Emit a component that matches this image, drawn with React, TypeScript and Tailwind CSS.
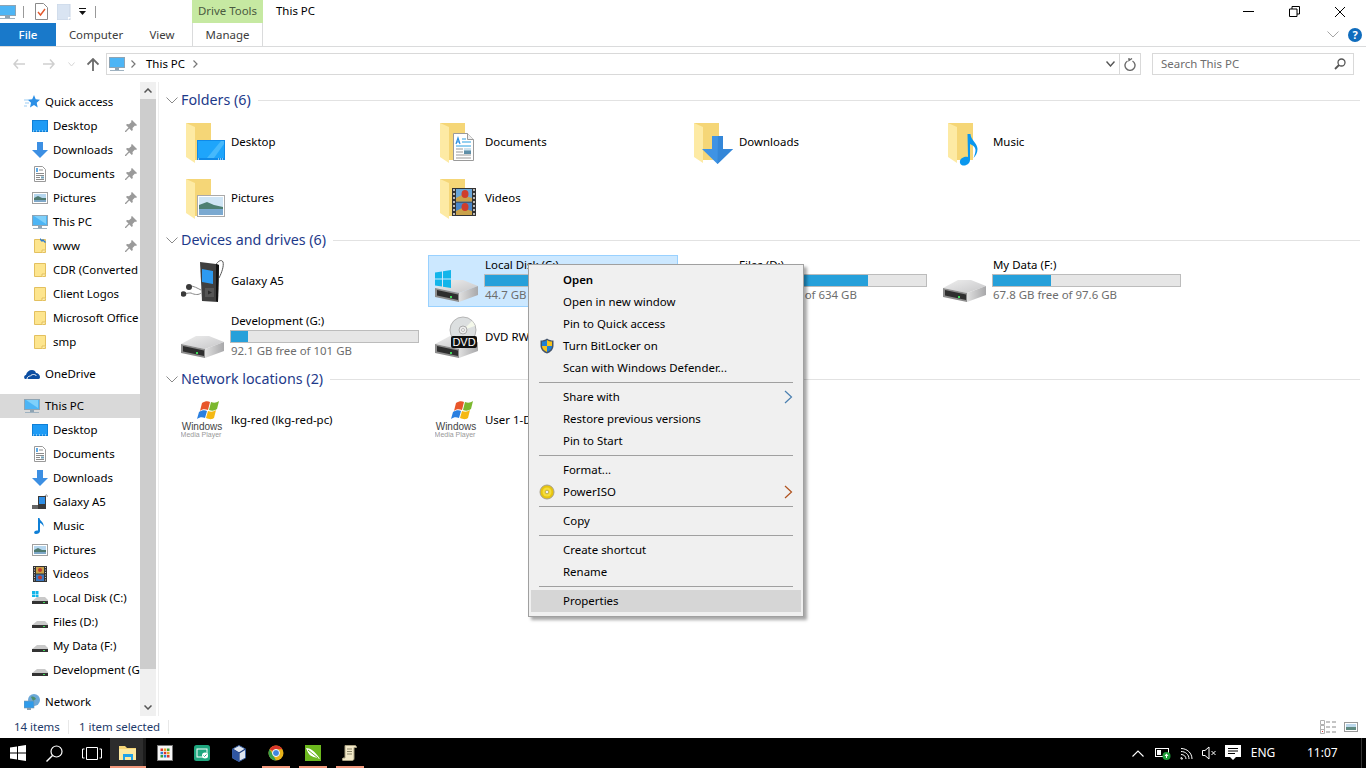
import React from "react";

const font = "font-['Noto_Sans',sans-serif]";

/* ---------- small sidebar icons (16x16) ---------- */
const SDesktop = () => (
  <svg width="16" height="16" viewBox="0 0 16 16"><rect x="0" y="2" width="16" height="12" fill="#0f7fd6" /><rect x="1" y="3" width="14" height="10" fill="#1e9bf5" /><path d="M1 13h14" stroke="#d8efff" strokeDasharray="1 2" /></svg>
);
const SDown = () => (
  <svg width="16" height="16" viewBox="0 0 16 16"><path d="M5 0h6v8h5l-8 8-8-8h5z" fill="#3c8fe3" /></svg>
);
const SDoc = () => (
  <svg width="16" height="16" viewBox="0 0 16 16"><path d="M2.5.5h8l3 3v12h-11z" fill="#fff" stroke="#9a9a9a" /><path d="M4 3h2M4 5h2" stroke="#2a8fe0" strokeWidth="1.4" /><path d="M7 4h4M4 7.5h8M4 9.5h8M4 11.5h4M4 13.5h8" stroke="#8a8a8a" /><rect x="9" y="10.5" width="3" height="2" fill="#6f9fb8" /></svg>
);
const SPic = () => (
  <svg width="16" height="16" viewBox="0 0 16 16"><rect x=".5" y="2.5" width="15" height="11" fill="#fff" stroke="#a0a0a0" /><rect x="2" y="4" width="12" height="4" fill="#b5d6ee" /><path d="M2 8l4-2 4 2 4 0v4H2z" fill="#4f7a70" /><rect x="2" y="10" width="12" height="2" fill="#7fa8c8" /></svg>
);
const SPC = () => (
  <svg width="16" height="16" viewBox="0 0 16 16"><rect x=".5" y="1.5" width="15" height="10" fill="#4db5f5" stroke="#8ea4b4" /><path d="M2 2h12v8z" fill="#7fd0fa" /><rect x="6" y="12" width="4" height="2" fill="#8ea4b4" /><path d="M1 14.5h14" stroke="#9fb2c0" /></svg>
);
const SFolder = ({ www }: { www?: boolean }) => (
  <svg width="16" height="16" viewBox="0 0 16 16"><path d="M2.5 1.5h11v13h-11z" fill="#fde58e" stroke="#e3c05f" /><path d="M10 15v-3h4" fill="#fff1b8" stroke="#e3c05f" />{www && <path d="M8 0l2 2 1-1 3 3-1 1-2-2-1 1-2-2z" fill="#2f7dd0" />}</svg>
);
const SOneDrive = () => (
  <svg width="16" height="16" viewBox="0 0 16 16"><path d="M1 13c-1.500-1-1-4 1-4 .5-3 3-5 6-5 2 0 3.500 1 4 3 2 0 4 2 4 4 0 1-.5 2-1.500 2z" fill="#0b4ea2" /><path d="M3 13c0-2 2-3 3.500-3 1-2 5-2 6 0" fill="none" stroke="#fff" strokeWidth="1" /></svg>
);
const SGalaxy = () => (
  <svg width="16" height="16" viewBox="0 0 16 16"><rect x="6" y="2" width="8" height="13" fill="#3a3a3a" /><rect x="7" y="3" width="6" height="7" fill="#2f8fe6" /><path d="M13 2c1-2 3-1 2 1" fill="none" stroke="#888" /><rect x="0" y="11" width="6" height="4" fill="#666" /></svg>
);
const SMusic = () => (
  <svg width="16" height="16" viewBox="0 0 16 16"><path d="M6 0h1.500c0 3 5 4 4 9-.3-2-2-3.500-3.500-4v8c0 2-2 3-4 3s-2.500-2-1-3c1-.7 2-.7 3-.4z" fill="#0f7fd6" /></svg>
);
const SVideo = () => (
  <svg width="16" height="16" viewBox="0 0 16 16"><rect x="1" y="0" width="14" height="16" fill="#333" /><rect x="4" y="1" width="8" height="6.500" fill="#c9a24a" /><rect x="4" y="8.500" width="8" height="6.500" fill="#3b78c0" /><circle cx="8" cy="4" r="2" fill="#c0392b" /><circle cx="8" cy="11.500" r="2" fill="#c0392b" /><path d="M2.500 1v14M13.500 1v14" stroke="#ccc" strokeDasharray="1 1.500" /></svg>
);
const SDrive = ({ win }: { win?: boolean }) => (
  <svg width="16" height="16" viewBox="0 0 16 16">
    <path d="M2 9.500l3-2.500h8l3 3v1H0z" fill="#c9c9c9" />
    <path d="M0 11h16v3H0z" fill="#333" />
    <rect x="11" y="12" width="2" height="1" fill="#3fdc5a" />
    {win && <g fill="#13b5ea"><rect x="0" y="1" width="3" height="3" /><rect x="3.500" y="1" width="3" height="3" /><rect x="0" y="4.500" width="3" height="2.500" /><rect x="3.500" y="4.500" width="3" height="2.500" /></g>}
  </svg>
);
const SStar = () => (
  <svg width="16" height="16" viewBox="0 0 16 16"><path d="M10 1l1.700 4.300 4.300.4-3.300 3 1 4.800L10 11l-4 2.500 1-4.800-3.300-3 4.500-.4z" fill="#2b8fe6" /><path d="M0 6h4M1 9h4M0 12h3" stroke="#9dcdf3" /></svg>
);
const SNetwork = () => (
  <svg width="16" height="16" viewBox="0 0 16 16"><circle cx="10" cy="6" r="6" fill="#6ba8d8" /><path d="M7 3c2-1 4 0 5 2l-3 2z" fill="#4f8f6a" /><rect x="0" y="7" width="10" height="7" fill="#2f9bea" stroke="#7e98ab" strokeWidth=".6" /><rect x="3" y="14" width="4" height="2" fill="#8a9faf" /></svg>
);
const Pin = () => (
  <svg width="12" height="12" viewBox="0 0 12 12"><path d="M7 0l5 5-1 1-1-.5-2.500 2.500.3 2-1 1-2.500-2.500L1 12l-1 0 0-1 3.500-3.500L1 5l1-1 2 .3L6.500 2 6 1z" fill="#9a9a9a" /></svg>
);

/* ---------- large icons (44x48) ---------- */
const FolderBase = () => (
  <g>
    <path d="M5 5h25v37H14z" fill="#f5d677" />
    <path d="M5 5l9 4v36l-9-6z" fill="#fdeaa4" />
  </g>
);
const LDesktop = () => (
  <svg width="44" height="48" viewBox="0 0 44 48"><FolderBase /><rect x="16" y="22" width="28" height="20" fill="#0f8ae8" /><path d="M17 23h26v17H17z" fill="#1ea5fb" /><path d="M26 40l14-17h3v3L33 40z" fill="#46b9fc" /><path d="M17 41h1M37 41h5" stroke="#fff" strokeDasharray="1 1" /></svg>
);
const LDocs = () => (
  <svg width="44" height="48" viewBox="0 0 44 48"><FolderBase /><path d="M18.500 15.500h14l6 6v21h-20z" fill="#fff" stroke="#9a9a9a" /><path d="M32.500 15.500v6h6" fill="#eee" stroke="#9a9a9a" /><path d="M21 26l2-6 2 6M22 24h2" fill="none" stroke="#2a8fe0" strokeWidth="1.200" /><path d="M27 21h4M27 24h9M21 28h15" stroke="#2a9fe0" /><path d="M21 31h7M21 34h7M21 37h15M21 40h15" stroke="#999" /><rect x="29" y="30" width="7" height="6" fill="#5f8fa8" /><rect x="29" y="30" width="7" height="2.500" fill="#cde3ef" /></svg>
);
const LDown = () => (
  <svg width="44" height="48" viewBox="0 0 44 48"><FolderBase /><path d="M23 18h11v13h10L28.500 46 13 31h10z" fill="#3f93e4" /><path d="M29 18h5v13h10L28.500 46z" fill="#3487d8" /></svg>
);
const LMusic = () => (
  <svg width="44" height="48" viewBox="0 0 44 48"><FolderBase /><path d="M24.500 16h3c0 6 7 9 7 15 0 4-2 7-4 9 1-3 2-5 2-8 0-3-3-5-5.500-6v16c0 3-3 5.500-6 5.500s-4.500-2-4-4.500c.5-3 5-5 8-4z" fill="#0a97ee" /></svg>
);
const LPic = () => (
  <svg width="44" height="48" viewBox="0 0 44 48"><FolderBase /><rect x="16.500" y="21.500" width="27" height="21" fill="#fff" stroke="#aaa" /><rect x="18" y="23" width="24" height="10" fill="#cfe5f5" /><path d="M18 31l8-3 7 3 9 2v6H18z" fill="#4d7f72" /><rect x="18" y="35" width="24" height="6" fill="#7ba9d0" /></svg>
);
const LVideo = () => (
  <svg width="44" height="48" viewBox="0 0 44 48"><FolderBase /><rect x="17" y="14" width="24" height="28" fill="#333" /><rect x="21" y="15" width="16" height="12.500" fill="#6aa6d8" /><rect x="21" y="28.500" width="16" height="12.500" fill="#4a86c8" /><path d="M21 24l6-3 10 3v3.500H21z" fill="#c9a24a" /><path d="M21 37l6-3 10 3v4H21z" fill="#c9a24a" /><ellipse cx="30" cy="20" rx="3.500" ry="4" fill="#cf3d2b" /><ellipse cx="30" cy="33" rx="3.500" ry="4" fill="#cf3d2b" /><path d="M19 15v26M39 15v26" stroke="#bbb" strokeWidth="2" strokeDasharray="2 2" /></svg>
);
const DriveShape = () => (
  <g>
    <defs>
      <linearGradient id="drvTop" x1="0" y1="0" x2="1" y2="1"><stop offset="0" stopColor="#eeeeee" /><stop offset="1" stopColor="#c6c6c8" /></linearGradient>
      <linearGradient id="drvRight" x1="0" y1="0" x2="1" y2="0"><stop offset="0" stopColor="#e0e0e0" /><stop offset="1" stopColor="#a8a8aa" /></linearGradient>
    </defs>
    <path d="M0 31l15-8h13l15 6-19 7z" fill="url(#drvTop)" />
    <path d="M24 36l19-7v9l-19 7z" fill="url(#drvRight)" />
    <path d="M0 31l24 5v9L0 40z" fill="#8c8c8c" />
    <path d="M2 33l21 4.500v5.500L2 38.500z" fill="#2e2e2e" />
    <rect x="15" y="39" width="2" height="2" fill="#3fdc5a" />
  </g>
);
const LDrive = () => (<svg width="44" height="48" viewBox="0 0 44 48"><DriveShape /></svg>);
const LWinDrive = () => (
  <svg width="44" height="48" viewBox="0 0 44 48"><DriveShape /><g fill="#13b5ea"><path d="M0 15.500l7-1v7H0z" /><path d="M8 14.300l8-1.300v8.500H8z" /><path d="M0 22.500h7v7l-7-1z" /><path d="M8 22.500h8V31l-8-1.200z" /></g></svg>
);
const LDvd = () => (
  <svg width="44" height="48" viewBox="0 0 44 48">
    <DriveShape />
    <circle cx="28" cy="17" r="13" fill="#dcdfe0" stroke="#b5b5b5" />
    <path d="M28 17l9-9a13 13 0 0 1 3 5z" fill="#f4f8ea" />
    <circle cx="28" cy="17" r="4" fill="#eee" stroke="#aaa" />
    <circle cx="28" cy="17" r="1.500" fill="#fff" stroke="#bbb" />
    <rect x="16" y="23" width="26" height="12" rx="2" fill="#111" />
    <text x="29" y="33" textAnchor="middle" fill="#fff" fontSize="11" fontFamily="Liberation Sans, sans-serif">DVD</text>
  </svg>
);
const LGalaxy = () => (
  <svg width="44" height="48" viewBox="0 0 44 48">
    <path d="M33 11c2-5 7-10 9-6 1 4-1 10-4 16" fill="none" stroke="#555" />
    <path d="M9 29c4 0 7 2 11 4M3 37c4-1 5-1 7-1 4 2 8 2 10 0" fill="none" stroke="#888" />
    <path d="M19 5l16 2 3 1-1 37-16-1z" fill="#3f3f3f" />
    <path d="M35 7l3 1-1 37-2-1z" fill="#111" />
    <path d="M21 12l11 2v13l-11-2z" fill="#2d9af0" />
    <rect x="24" y="31" width="9" height="9" fill="#555" />
    <path d="M27 33.500l4 2-4 2z" fill="#2a2a2a" />
    <circle cx="8" cy="30" r="3" fill="#3a3a3a" />
    <circle cx="2.500" cy="37" r="2.800" fill="#3a3a3a" />
  </svg>
);
const LWmp = () => (
  <svg width="44" height="48" viewBox="0 0 44 48">
    <g transform="translate(10 -1)">
      <path d="M11 8c3-2 6-2 8-1l-2 8c-3-1-6-1-8 1z" fill="#e8562a" />
      <path d="M20 7c3 1 5 1 8-1l-2 8c-3 2-5 2-8 1z" fill="#7cb82f" />
      <path d="M8 17c3-2 6-2 8-1l-2 7c-3-1-5-1-8 1z" fill="#2a7fe0" />
      <path d="M17 16c3 1 5 1 8-1l-2 8c-3 2-5 1-8 0z" fill="#f5b914" />
    </g>
    <text x="21" y="33.500" textAnchor="middle" fill="#444" fontSize="10" fontFamily="Liberation Sans, sans-serif">Windows</text>
    <text x="20" y="40.500" textAnchor="middle" fill="#999" fontSize="7" fontFamily="Liberation Sans, sans-serif">Media Player</text>
  </svg>
);

/* ---------- data ---------- */
type Nav = { label: string; icon: React.ReactNode; pin?: boolean };
const quick: Nav[] = [
  { label: "Desktop", icon: <SDesktop />, pin: true },
  { label: "Downloads", icon: <SDown />, pin: true },
  { label: "Documents", icon: <SDoc />, pin: true },
  { label: "Pictures", icon: <SPic />, pin: true },
  { label: "This PC", icon: <SPC />, pin: true },
  { label: "www", icon: <SFolder www />, pin: true },
  { label: "CDR (Converted", icon: <SFolder /> },
  { label: "Client Logos", icon: <SFolder /> },
  { label: "Microsoft Office", icon: <SFolder /> },
  { label: "smp", icon: <SFolder /> },
];
const pc: Nav[] = [
  { label: "Desktop", icon: <SDesktop /> },
  { label: "Documents", icon: <SDoc /> },
  { label: "Downloads", icon: <SDown /> },
  { label: "Galaxy A5", icon: <SGalaxy /> },
  { label: "Music", icon: <SMusic /> },
  { label: "Pictures", icon: <SPic /> },
  { label: "Videos", icon: <SVideo /> },
  { label: "Local Disk (C:)", icon: <SDrive win /> },
  { label: "Files (D:)", icon: <SDrive /> },
  { label: "My Data (F:)", icon: <SDrive /> },
  { label: "Development (G:)", icon: <SDrive /> },
];

const NavChild = ({ item }: { item: Nav }) => (
  <div className="flex h-[24px] items-center pl-[32px]">
    <span className="w-[16px] h-[16px] shrink-0">{item.icon}</span>
    <span className="ml-[5px] whitespace-nowrap">{item.label}</span>
    {item.pin && <span className="ml-auto mr-[3px] w-[12px] h-[12px] flex shrink-0"><Pin /></span>}
  </div>
);
const NavTop = ({ label, icon, active, extra }: { label: string; icon: React.ReactNode; active?: boolean; extra: string }) => (
  <div className={`flex h-[24px] items-center pl-[24px] ${extra} ${active ? "bg-[#d9d9d9]" : ""}`}>
    <span className="w-[16px] h-[16px] shrink-0">{icon}</span>
    <span className="ml-[5px] whitespace-nowrap">{label}</span>
  </div>
);

const Header = ({ title }: { title: string }) => (
  <div className="flex h-[24px] items-center pl-[7px]">
    <svg width="12" height="7" viewBox="0 0 12 7"><path d="M.5.5L6 6l5.500-5.500" fill="none" stroke="#8a8a8a" /></svg>
    <span className="ml-[3px] text-[14.3px] text-[#1e3a8a] whitespace-nowrap">{title}</span>
    <span className="ml-[7px] flex-1 h-px bg-[#e2e2e2]" />
  </div>
);

const Tile = ({ icon, name, selected }: { icon: React.ReactNode; name: string; selected?: boolean }) => (
  <div className={`flex h-[52px] w-[250px] items-center border pl-[6px] ${selected ? "bg-[#cce8ff] border-[#99d1ff]" : "border-transparent"}`}>
    <span className="w-[44px] h-[48px] shrink-0">{icon}</span>
    <span className="ml-[6px] whitespace-nowrap">{name}</span>
  </div>
);
const DriveTile = ({ icon, name, sub, used, selected }: { icon: React.ReactNode; name: string; sub: string; used: number; selected?: boolean }) => (
  <div className={`flex h-[52px] w-[250px] items-center border pl-[6px] ${selected ? "bg-[#cce8ff] border-[#99d1ff]" : "border-transparent"}`}>
    <span className="w-[44px] h-[48px] shrink-0">{icon}</span>
    <div className="ml-[5px] self-start pt-px w-[189px]">
      <div className="h-[16px] pl-px leading-[16px] whitespace-nowrap">{name}</div>
      <div className="mt-px h-[13px] border border-[#bcbcbc] bg-[#e6e6e6]">
        <div className="h-full bg-[#26a0da]" style={{ width: `${used}%` }} />
      </div>
      <div className="h-[16px] pl-px leading-[16px] text-[#6d6d6d] whitespace-nowrap">{sub}</div>
    </div>
  </div>
);

type MI = { t: string; bold?: boolean; icon?: React.ReactNode; arrow?: string; hi?: boolean } | null;
const menu: MI[] = [
  { t: "Open", bold: true },
  { t: "Open in new window" },
  { t: "Pin to Quick access" },
  {
    t: "Turn BitLocker on",
    icon: (
      <svg width="16" height="16" viewBox="0 0 16 16"><path d="M8 .5c2 1.500 4 2 6.500 2v5c0 4-3 7-6.500 8-3.500-1-6.500-4-6.500-8v-5C4 2.500 6 2 8 .5z" fill="#44546a" /><path d="M8 2v6H3V3.500C5 3.500 6.500 3 8 2z" fill="#1e7fd6" /><path d="M8 2c1.500 1 3 1.500 5 1.500V8H8z" fill="#f8c31a" /><path d="M3 8h5v6c-2.500-1-5-3-5-6z" fill="#f8c31a" /><path d="M8 8h5c0 3-2.500 5-5 6z" fill="#1e7fd6" /></svg>
    ),
  },
  { t: "Scan with Windows Defender..." },
  null,
  { t: "Share with", arrow: "#4a7fb0" },
  { t: "Restore previous versions" },
  { t: "Pin to Start" },
  null,
  { t: "Format..." },
  {
    t: "PowerISO",
    arrow: "#b0521e",
    icon: (
      <svg width="16" height="16" viewBox="0 0 16 16"><circle cx="8" cy="8" r="7" fill="#e6c40f" stroke="#a8a08a" /><circle cx="8" cy="8" r="4.500" fill="#f6dd3a" /><circle cx="8" cy="8" r="1.800" fill="#f0f0f0" stroke="#a08a20" strokeWidth=".6" /></svg>
    ),
  },
  null,
  { t: "Copy" },
  null,
  { t: "Create shortcut" },
  { t: "Rename" },
  null,
  { t: "Properties", hi: true },
];

const Cell = ({ children, on, active }: { children: React.ReactNode; on?: boolean; active?: boolean }) => (
  <div className={`relative flex h-[30px] items-center justify-center ${active ? "w-[36px] bg-[#2d2d2d]" : "w-[37px]"}`}>
    {children}
    {active && <span className="absolute inset-y-0 right-0 w-[3px] bg-[#1c1c1c]" />}
    {on && <span className={`absolute bottom-0 h-[2px] bg-[#f2987c] ${active ? "left-0 right-0" : "left-[5px] right-[4px]"}`} />}
  </div>
);

export default function App() {
  return (
    <div className={`relative flex h-[768px] w-[1366px] flex-col overflow-hidden bg-white text-[11.45px] text-black ${font}`}>
      {/* Title row */}
      <div className="flex h-[23px] shrink-0 items-center">
        <div className="flex w-[192px] items-center">
          <svg className="ml-[-1px]" width="17" height="16" viewBox="0 0 17 16"><rect x=".5" y="1.500" width="16" height="10" fill="#4db5f5" stroke="#8ea4b4" /><rect x="6" y="12" width="5" height="2" fill="#8ea4b4" /><path d="M1 14.500h15" stroke="#9fb2c0" /></svg>
          <span className="ml-[7px] w-px h-[12px] bg-[#999]" />
          <svg className="ml-[11px]" width="13" height="17" viewBox="0 0 13 17"><path d="M.5.500h8l4 4v12H.5z" fill="#fff" stroke="#8a8a8a" /><path d="M3 9l2.500 3L10 6" fill="none" stroke="#e2572b" strokeWidth="1.400" /></svg>
          <svg className="ml-[9px]" width="14" height="16" viewBox="0 0 14 16"><path d="M0 0h13v16H0z" fill="#d9e4f2" stroke="#c9d5e5" /><path d="M11 16v-3h3" fill="#fff" /></svg>
          <svg className="ml-[7px]" width="9" height="9" viewBox="0 0 9 9"><path d="M1 1.500h7" stroke="#111" /><path d="M1 4h7L4.500 8z" fill="#111" /></svg>
          <span className="ml-[8px] w-px h-[12px] bg-[#999]" />
        </div>
        <div className="flex h-full w-[71px] items-center justify-center bg-[#c6e9a2] pb-[2px] text-[#4a5a40]">Drive Tools</div>
        <div className="ml-[13px] pb-px">This PC</div>
        <div className="ml-auto mr-[3px] flex h-full">
          <div className="flex w-[46px] items-center justify-center"><svg width="11" height="11" viewBox="0 0 11 11"><path d="M0 5.500h11" stroke="#000" /></svg></div>
          <div className="flex w-[46px] items-center justify-center"><svg width="11" height="11" viewBox="0 0 11 11"><path d="M.5 3h7.500v7.500H.5zM3 3V.5h7.500V8H8" fill="none" stroke="#000" /></svg></div>
          <div className="flex w-[46px] items-center justify-center"><svg width="12" height="12" viewBox="0 0 12 12"><path d="M1 1l10 10M11 1L1 11" stroke="#000" /></svg></div>
        </div>
      </div>
      {/* Ribbon tabs */}
      <div className="flex h-[24px] shrink-0 items-stretch border-b border-[#dadbdc] text-[#3c3c3c]">
        <div className="flex w-[56px] items-center justify-center bg-[#1979ca] font-medium text-white">File</div>
        <div className="flex w-[80px] items-center justify-center">Computer</div>
        <div className="flex w-[56px] items-center justify-center pr-[4px]">View</div>
        <div className="flex w-[71px] items-center justify-center border-x border-[#dadbdc]">Manage</div>
        <div className="ml-auto flex items-center">
          <svg width="12" height="7" viewBox="0 0 12 7"><path d="M.5.5L6 6l5.500-5.500" fill="none" stroke="#a5a5a5" /></svg>
          <div className="ml-[9px] mr-[4px] flex h-[14px] w-[14px] items-center justify-center rounded-full bg-[#0f6cbd] text-[11px] font-bold leading-none text-white">?</div>
        </div>
      </div>
      {/* Address row */}
      <div className="flex h-[35px] shrink-0 items-start pt-[6px]">
        <div className="flex h-[22px] w-[106px] items-center">
          <svg className="ml-[13px]" width="12" height="10" viewBox="0 0 12 10"><path d="M5 .5L1 5l4 4.500M1 5h11" fill="none" stroke="#cfcfcf" strokeWidth="1.500" /></svg>
          <svg className="ml-[18px]" width="12" height="10" viewBox="0 0 12 10"><path d="M7 .5L11 5l-4 4.500M11 5H0" fill="none" stroke="#cfcfcf" strokeWidth="1.500" /></svg>
          <svg className="ml-[13px]" width="7" height="5" viewBox="0 0 7 5"><path d="M.5.500L3.500 4l3-3.500" fill="none" stroke="#d5d5d5" /></svg>
          <svg className="ml-[12px]" width="12" height="13" viewBox="0 0 12 13"><path d="M.5 6.500L6 1l5.500 5.500M6 1v12" fill="none" stroke="#6a6a6a" strokeWidth="1.800" /></svg>
        </div>
        <div className="flex h-[22px] w-[1035px] items-center border border-[#d9d9d9]">
          <span className="ml-[2px] flex"><svg width="16" height="16" viewBox="0 0 16 16"><rect x=".5" y="1.500" width="15" height="10" fill="#4db5f5" stroke="#8ea4b4" /><rect x="6" y="12" width="4" height="2" fill="#8ea4b4" /><path d="M1 14.500h14" stroke="#9fb2c0" /></svg></span>
          <svg className="ml-[6px]" width="5" height="8" viewBox="0 0 5 8"><path d="M.5.5L4 4 .5 7.500" fill="none" stroke="#777" strokeWidth="1.200" /></svg>
          <span className="ml-[10px] pb-px">This PC</span>
          <svg className="ml-[8px]" width="5" height="8" viewBox="0 0 5 8"><path d="M.5.5L4 4 .5 7.500" fill="none" stroke="#777" strokeWidth="1.200" /></svg>
          <div className="ml-auto flex h-full items-center">
            <svg className="mr-[4px]" width="9" height="6" viewBox="0 0 9 6"><path d="M.5.500L4.500 5l4-4.500" fill="none" stroke="#555" strokeWidth="1.400" /></svg>
            <div className="flex h-full w-[21px] items-center justify-center border-l border-[#d9d9d9]">
              <svg width="12" height="13" viewBox="0 0 12 13"><path d="M3.500 3a5 5 0 1 0 5 0M8 .5L5 2.500V0" fill="none" stroke="#6a6a6a" strokeWidth="1.400" /></svg>
            </div>
          </div>
        </div>
        <div className="ml-[11px] flex h-[22px] w-[202px] items-center border border-[#d9d9d9] pl-[8px] text-[#6d6d6d]">
          <span className="pb-px">Search This PC</span>
          <svg className="ml-auto mr-[7px]" width="12" height="12" viewBox="0 0 12 12"><circle cx="7.500" cy="4.500" r="3.500" fill="none" stroke="#555" strokeWidth="1.300" /><path d="M5 7l-4 4" stroke="#555" strokeWidth="1.800" /></svg>
        </div>
      </div>
      {/* Main */}
      <div className="flex min-h-0 flex-1">
        <div className="h-full w-[140px] shrink-0 overflow-hidden pt-[8px]">
          <NavTop label="Quick access" icon={<SStar />} extra="" />
          {quick.map((q) => <NavChild key={q.label} item={q} />)}
          <NavTop label="OneDrive" icon={<SOneDrive />} extra="mt-[8px]" />
          <NavTop label="This PC" icon={<SPC />} active extra="mt-[8px]" />
          {pc.map((q) => <NavChild key={q.label} item={q} />)}
          <NavTop label="Network" icon={<SNetwork />} extra="mt-[8px]" />
        </div>
        <div className="flex h-full w-[16px] shrink-0 flex-col bg-[#f0f0f0]">
          <div className="flex h-[17px] items-center justify-center"><svg width="8" height="5" viewBox="0 0 8 5"><path d="M.5 4.500L4 1l3.500 3.500" fill="none" stroke="#555" strokeWidth="1.500" /></svg></div>
          <div className="h-[570px] bg-[#cdcdcd]" />
          <div className="flex-1" />
          <div className="flex h-[18px] items-center justify-center"><svg width="8" height="5" viewBox="0 0 8 5"><path d="M.5.500L4 4l3.500-3.500" fill="none" stroke="#555" strokeWidth="1.500" /></svg></div>
        </div>
        <div className="ml-[2px] h-full w-px shrink-0 bg-[#eeeeee]" />
        <div className="min-w-0 flex-1 pr-[6px] pt-[6px]">
          <Header title="Folders (6)" />
          <div className="mt-[4px] ml-[15px] grid grid-cols-[repeat(4,250px)] gap-[4px]">
            <Tile icon={<LDesktop />} name="Desktop" />
            <Tile icon={<LDocs />} name="Documents" />
            <Tile icon={<LDown />} name="Downloads" />
            <Tile icon={<LMusic />} name="Music" />
            <Tile icon={<LPic />} name="Pictures" />
            <Tile icon={<LVideo />} name="Videos" />
          </div>
          <div className="mt-[4px]"><Header title="Devices and drives (6)" /></div>
          <div className="mt-[3px] ml-[15px] grid grid-cols-[repeat(4,250px)] gap-[4px]">
            <Tile icon={<LGalaxy />} name="Galaxy A5" />
            <DriveTile icon={<LWinDrive />} name="Local Disk (C:)" sub="44.7 GB free of 111 GB" used={60} selected />
            <DriveTile icon={<LDrive />} name="Files (D:)" sub="197 GB free of 634 GB" used={69} />
            <DriveTile icon={<LDrive />} name="My Data (F:)" sub="67.8 GB free of 97.6 GB" used={31} />
            <DriveTile icon={<LDrive />} name="Development (G:)" sub="92.1 GB free of 101 GB" used={9} />
            <Tile icon={<LDvd />} name="DVD RW Drive (E:)" />
          </div>
          <div className="mt-[4px]"><Header title="Network locations (2)" /></div>
          <div className="mt-[3px] ml-[15px] grid grid-cols-[repeat(4,250px)] gap-[4px]">
            <Tile icon={<LWmp />} name="lkg-red (lkg-red-pc)" />
            <Tile icon={<LWmp />} name="User 1-DESKTOP" />
          </div>
        </div>
      </div>
      {/* Status bar */}
      <div className="flex h-[22px] shrink-0 items-center pl-[14px] text-[#1e3a6a]">
        <span className="w-[54px]">14 items</span>
        <span className="h-[14px] w-px bg-[#e8e8e8]" />
        <span className="ml-[10px] w-[89px]">1 item selected</span>
        <span className="h-[14px] w-px bg-[#e8e8e8]" />
        <div className="ml-auto mr-[8px] flex items-center gap-[7px]">
          <svg width="17" height="14" viewBox="0 0 17 14"><path d="M.5.500h4v4h-4zM.5 5.500h4v4h-4zM.5 9.500h4v4h-4z" fill="#fff" stroke="#b0b0b0" /><path d="M6 2h4M12 2h4M6 7h4M12 7h4M6 12h4M12 12h4" stroke="#8a8a8a" /><rect x="2" y="11" width="1" height="1" fill="#d33" /></svg>
          <svg width="14" height="10" viewBox="0 0 14 10"><rect x=".5" y=".5" width="13" height="9" fill="#fff" stroke="#9a9a9a" /><rect x="2" y="2" width="10" height="3" fill="#bcd8ec" /><rect x="2" y="5" width="10" height="3" fill="#5f8a80" /></svg>
        </div>
      </div>
      {/* Taskbar */}
      <div className="flex h-[30px] shrink-0 items-center bg-black text-[12px] text-white">
        <div className="flex h-full w-[110px] items-center">
          <svg className="ml-[10px]" width="16" height="16" viewBox="0 0 16 16"><path d="M0 2.500L7 1.500V7.500H0zM8 1.300L16 0V7.500H8zM0 8.500h7v6l-7-1zM8 8.500h8V16l-8-1.300z" fill="#fff" /></svg>
          <svg className="ml-[20px]" width="17" height="17" viewBox="0 0 17 17"><circle cx="10.500" cy="6.500" r="5.500" fill="none" stroke="#fff" strokeWidth="1.200" /><path d="M6.500 10.500L.5 16.500" stroke="#fff" strokeWidth="1.400" /></svg>
          <svg className="ml-[19px]" width="20" height="13" viewBox="0 0 20 13"><path d="M4.500.500h11v12h-11z" fill="none" stroke="#fff" /><path d="M2.500 2H.5v9h2M17.500 2h2v9h-2" fill="none" stroke="#fff" /></svg>
        </div>
        <Cell on active>
          <svg width="18" height="16" viewBox="0 0 18 16"><path d="M0 1h6l2 2h9v12H0z" fill="#f6d577" /><path d="M0 4h17v11H0z" fill="#fde9a0" /><path d="M4 9h10v6h-2v-3H6v3H4z" fill="#22a3e8" /></svg>
        </Cell>
        <Cell><svg width="16" height="16" viewBox="0 0 16 16"><rect x=".5" y=".5" width="15" height="15" fill="#f6f6f6" stroke="#777" /><g><rect x="3.500" y="3.500" width="2.500" height="2.500" fill="#d9352a" /><rect x="6.800" y="3.500" width="2.500" height="2.500" fill="#e8a020" /><rect x="10" y="3.500" width="2.500" height="2.500" fill="#3aa03a" /><rect x="3.500" y="6.800" width="2.500" height="2.500" fill="#2a7fd0" /><rect x="6.800" y="6.800" width="2.500" height="2.500" fill="#d9352a" /><rect x="10" y="6.800" width="2.500" height="2.500" fill="#e8a020" /><rect x="3.500" y="10" width="2.500" height="2.500" fill="#3aa03a" /><rect x="6.800" y="10" width="2.500" height="2.500" fill="#2a7fd0" /><rect x="10" y="10" width="2.500" height="2.500" fill="#d9352a" /></g></svg></Cell>
        <Cell><svg width="16" height="16" viewBox="0 0 16 16"><rect width="16" height="16" rx="2.500" fill="#1fa77f" /><rect x="3" y="4" width="10" height="8" fill="none" stroke="#fff" /><circle cx="11" cy="10.500" r="3" fill="#fff" /><path d="M9.500 10.500l1 1 2-2" fill="none" stroke="#1fa77f" /></svg></Cell>
        <Cell><svg width="14" height="17" viewBox="0 0 14 17"><path d="M7 .5L13.500 4v9L7 16.500.5 13V4z" fill="#dfe6f0" stroke="#3a5f9f" /><path d="M.5 4L7 8l6.500-4M7 8v8.500" fill="none" stroke="#1f3f80" strokeWidth="1.200" /><path d="M7 8L.5 4v9L7 16.500z" fill="#2f55a0" /></svg></Cell>
        <Cell on><svg width="16" height="16" viewBox="0 0 16 16"><circle cx="8" cy="8" r="7.500" fill="#e8b21a" /><path d="M8 .5A7.500 7.500 0 0 1 14.500 4.300H8z" fill="#d9352a" /><path d="M1.500 4.300A7.500 7.500 0 0 1 8 .5v3.800a3.700 3.700 0 0 0-3.200 1.800z" fill="#d9352a" /><path d="M1.500 4.300L5 10l3 5.500A7.500 7.500 0 0 1 1.500 4.300z" fill="#3aa04a" /><circle cx="8" cy="8" r="3.500" fill="#3f86e0" stroke="#fff" /></svg></Cell>
        <Cell on><svg width="16" height="16" viewBox="0 0 16 16"><rect width="16" height="16" fill="#6cb81e" /><path d="M1 3c4 0 9 3 14 11-5-2-9-2-11-5C2.500 7 2 5 1 3z" fill="#fff" /><path d="M3 5l10 8" stroke="#6cb81e" /></svg></Cell>
        <Cell on><svg width="15" height="16" viewBox="0 0 15 16"><path d="M3 .5h10c1 0 1.500 1 1.500 2H12v11c0 1.500-1 2-2 2H1c-1 0-1-2 0-2.500h2z" fill="#f2e8c8" stroke="#a9a080" /><path d="M5 4h5M5 6.500h5M5 9h5" stroke="#8a8468" /></svg></Cell>
        <div className="ml-auto flex h-full items-center">
          <svg className="mr-[11px]" width="12" height="7" viewBox="0 0 12 7"><path d="M.5 6.500L6 1l5.500 5.500" fill="none" stroke="#fff" strokeWidth="1.100" /></svg>
          <svg className="mr-[9px]" width="16" height="14" viewBox="0 0 16 14"><rect x=".5" y="2.500" width="13" height="8" fill="none" stroke="#fff" /><rect x="2" y="4" width="4" height="5" fill="#fff" /><circle cx="11.500" cy="10" r="4" fill="#1e9e3a" /><path d="M11.500 7.500l-2 2.500h1.500v2h1v-2H13.500z" fill="#fff" /></svg>
          <svg className="mr-[8px]" width="14" height="14" viewBox="0 0 14 14"><path d="M1 13h1.500c0-1-.5-1.500-1.500-1.500zM1 8.500c3 0 5 2 5 4.500M1 5.500c4.500 0 8 3 8 7.500M1 2.500C7 2.500 12 7 12 13" fill="none" stroke="#fff" /></svg>
          <svg className="mr-[8px]" width="15" height="14" viewBox="0 0 15 14"><path d="M.5 4.500h2.500L7 1v12L3 9.500H.5z" fill="none" stroke="#fff" /><path d="M9.500 5l4 4M13.500 5l-4 4" stroke="#fff" /></svg>
          <svg className="mr-[9px]" width="16" height="16" viewBox="0 0 16 16"><path d="M0 0h16v12h-5l-3 3-3-3H0z" fill="#fff" /><path d="M3 3.500h10M3 6h10M3 8.500h7" stroke="#000" /></svg>
          <span className="w-[26px] text-center">ENG</span>
          <span className="ml-[31px] w-[30px] text-center">11:07</span>
          <span className="ml-[24px] mr-[4px] h-full w-px bg-[#333]" />
        </div>
      </div>
      {/* Context menu */}
      <div className="absolute left-[528px] top-[264px] h-[353px] w-[276px] border border-[#a0a0a0] bg-[#f0f0f0] pt-[4px] shadow-[3px_3px_3px_rgba(0,0,0,0.35)]">
        {menu.map((m, i) =>
          m === null ? (
            <div key={i} className="mx-[10px] flex h-[7px] items-center"><div className="h-px w-full bg-[#a0a0a0]" /></div>
          ) : (
            <div key={i} className={`mx-[2px] flex h-[22px] items-center ${m.hi ? "bg-[#d6d6d6]" : ""}`}>
              <span className="ml-[8px] flex h-[16px] w-[16px] shrink-0">{m.icon}</span>
              <span className={`ml-[8px] whitespace-nowrap ${m.bold ? "font-semibold" : ""}`}>{m.t}</span>
              {m.arrow && (
                <svg className="ml-auto mr-[8px]" width="9" height="14" viewBox="0 0 9 14"><path d="M1 1l6.500 6L1 13" fill="none" stroke={m.arrow} strokeWidth="1.200" /></svg>
              )}
            </div>
          )
        )}
      </div>
    </div>
  );
}
